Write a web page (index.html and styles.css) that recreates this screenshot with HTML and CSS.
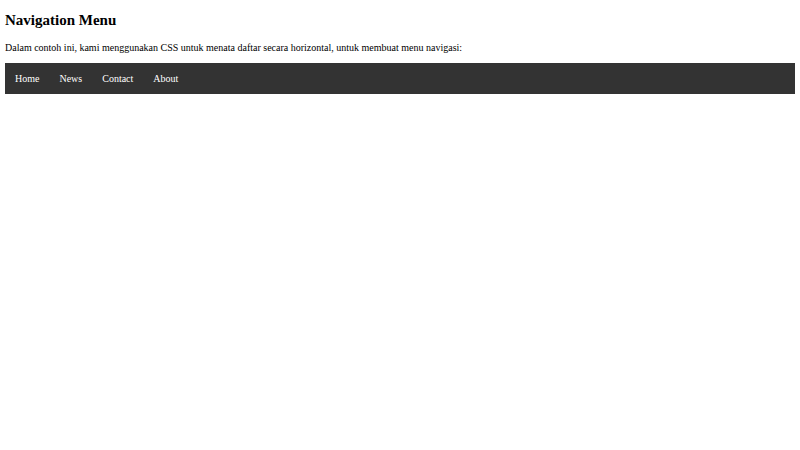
FILE: index.html
```html
<!DOCTYPE html>
<html>
<head>
<meta charset="utf-8">
<title>Navigation Menu</title>
<link rel="stylesheet" href="styles.css">
</head>
<body>
<h2 class="title">Navigation Menu</h2>
<p class="intro">Dalam contoh ini, kami menggunakan CSS untuk menata daftar secara horizontal, untuk membuat menu navigasi:</p>
<ul class="nav">
  <li><a class="nav-link" href="#home">Home</a></li>
  <li><a class="nav-link" href="#news">News</a></li>
  <li><a class="nav-link" href="#contact">Contact</a></li>
  <li><a class="nav-link" href="#about">About</a></li>
</ul>
</body>
</html>
```

FILE: styles.css
```css
html {
  font-size: 10px;
}
body {
  margin: 5px;
  font-family: "Liberation Serif", "Times New Roman", serif;
  font-size: 10px;
  color: #000;
  background: #fff;
}
.title {
  font-size: 15px;
  font-weight: bold;
  margin: 7.45px 0 12.45px;
}
.intro {
  margin: 10px 0;
}
.nav {
  list-style: none;
  margin: 0;
  padding: 0;
  display: flex;
  background-color: #333;
}
.nav-link {
  display: block;
  color: #fff;
  padding: 10px;
  text-decoration: none;
}
```
